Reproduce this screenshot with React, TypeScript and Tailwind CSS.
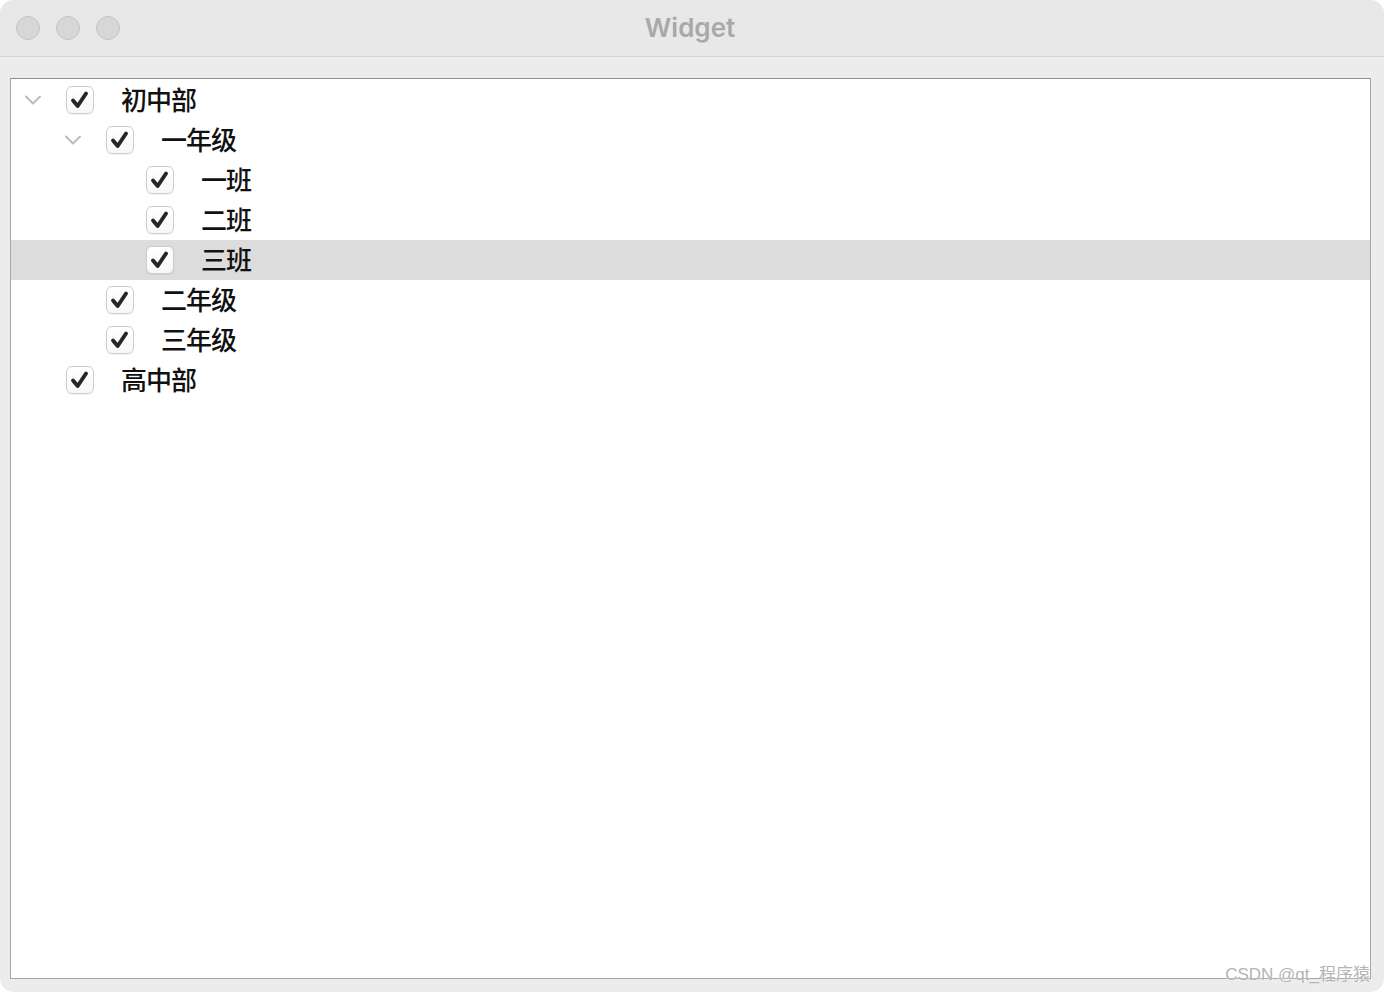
import React from "react";

type Node = { label: string; level: number; expandable?: boolean; selected?: boolean };

const rows: Node[] = [
  { label: "初中部", level: 0, expandable: true },
  { label: "一年级", level: 1, expandable: true },
  { label: "一班", level: 2 },
  { label: "二班", level: 2 },
  { label: "三班", level: 2, selected: true },
  { label: "二年级", level: 1 },
  { label: "三年级", level: 1 },
  { label: "高中部", level: 0 },
];

const indent = ["pl-0", "pl-[40px]", "pl-[80px]"];

function Chevron() {
  return (
    <svg width="18" height="12" viewBox="0 0 18 12" fill="none">
      <path d="M2 2.5 L9 9.5 L16 2.5" stroke="#bcbcbc" strokeWidth="2" strokeLinecap="round" strokeLinejoin="round" />
    </svg>
  );
}

function CheckBox() {
  return (
    <div className="w-[28px] h-[28px] rounded-[6px] border border-[#cdcdcd] bg-gradient-to-b from-white to-[#f7f7f7] shadow-[0_1px_1px_rgba(0,0,0,0.06)] flex items-center justify-center shrink-0">
      <svg width="28" height="28" viewBox="0 0 28 28" fill="none">
        <path d="M6.5 14.5 L11.5 20.5 L20.5 7" stroke="#262626" strokeWidth="4.2" strokeLinecap="round" strokeLinejoin="round" />
      </svg>
    </div>
  );
}

export default function App() {
  return (
    <div className="w-[1384px] h-[992px] bg-white">
      <div className="w-full h-full rounded-[14px] bg-[#ececec] flex flex-col overflow-hidden">
        {/* title bar */}
        <div className="relative h-[57px] shrink-0 bg-[#e8e8e8] border-b border-[#d3d3d3] flex items-center">
          <div className="flex gap-[16px] pl-[16px]">
            <div className="w-[24px] h-[24px] rounded-full bg-[#d7d7d7] border border-[#c5c5c5]" />
            <div className="w-[24px] h-[24px] rounded-full bg-[#d7d7d7] border border-[#c5c5c5]" />
            <div className="w-[24px] h-[24px] rounded-full bg-[#d7d7d7] border border-[#c5c5c5]" />
          </div>
          <div className="absolute inset-x-0 top-0 h-[54px] flex items-center justify-center pointer-events-none">
            <span className="font-['Inter','Liberation_Sans',sans-serif] font-semibold text-[26px] text-[#a9a9a9] -translate-x-[2px]">
              Widget
            </span>
          </div>
        </div>

        {/* tree widget */}
        <div className="flex-1 pl-[10px] pr-[13px] pt-[21px] pb-[13px] flex">
          <div className="relative flex-1 bg-white border border-[#a6a6a6] border-t-[#8e8e8e] pt-[1px]">
            {rows.map((r, i) => (
              <div
                key={i}
                className={`h-[40px] flex items-center ${r.selected ? "bg-[#dcdcdc]" : ""}`}
              >
                <div className={`flex items-center ${indent[r.level]}`}>
                  <div className="w-[44px] h-[40px] flex items-center justify-center">
                    {r.expandable ? <Chevron /> : null}
                  </div>
                  <div className="ml-[11px]">
                    <CheckBox />
                  </div>
                  <span className="ml-[27px] pb-[2px] font-['Noto_Sans_CJK_SC',sans-serif] font-medium text-[26px] leading-none text-[#111] tracking-[-1px]">
                    {r.label}
                  </span>
                </div>
              </div>
            ))}

            <div className="absolute right-0 bottom-[-5px] font-['Liberation_Sans','Noto_Sans_CJK_SC',sans-serif] text-[17px] leading-none text-[#b4b4b4] [text-shadow:0_0_2px_#fff]">
              CSDN @qt_程序猿
            </div>
          </div>
        </div>
      </div>
    </div>
  );
}
